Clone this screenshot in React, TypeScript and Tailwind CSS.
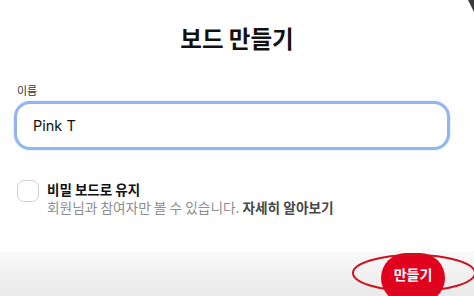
export default function App() {
  const ko = { fontFamily: '"Noto Sans CJK KR", "Noto Sans", sans-serif' };

  return (
    <div className="relative h-[296px] w-[474px] overflow-hidden bg-white" style={ko}>
      {/* corner of the window behind */}
      <svg className="absolute right-0 top-0" width="8" height="12" viewBox="0 0 8 12">
        <path d="M2 0 L8 0 L8 12 Z" fill="#3a3a3a" />
      </svg>

      <div className="flex flex-col">
        <h1 className="pt-[22px] text-center text-[23.5px] font-bold leading-[32px] text-[#111]">보드 만들기</h1>

        <label className="ml-[17px] mt-[29px] text-[11px] leading-[14px] text-[#333]">이름</label>

        <div className="ml-[14px] mt-[4px] flex h-[49px] w-[436px] items-center rounded-[16px] border-[3px] border-[#8fb6f0] pl-[16px] shadow-[0_0_2px_#b9d2f7]">
          <span className="text-[14.5px] text-[#111]" style={{ fontFamily: 'Inter, "Noto Sans", sans-serif' }}>
            Pink T
          </span>
        </div>

        <div className="ml-[17px] mt-[30px] flex gap-[8px]">
          <div className="h-[22px] w-[22px] shrink-0 rounded-[7px] border-[1.5px] border-[#d0d0d0]" />
          <div className="flex flex-col">
            <span className="text-[13.5px] font-bold leading-[18px] text-[#111]">비밀 보드로 유지</span>
            <span className="text-[13.7px] leading-[18px] text-[#8e8e8e]">
              회원님과 참여자만 볼 수 있습니다. <span className="font-bold text-[#484848]">자세히 알아보기</span>
            </span>
          </div>
        </div>
      </div>

      {/* footer */}
      <div className="absolute bottom-0 left-0 flex h-[45px] w-full justify-end bg-gradient-to-b from-[#f9f9f9] to-[#e9e9e9] pr-[29px]">
        <div className="mt-[2px] flex h-[50px] w-[64px] items-start justify-center rounded-full bg-[#e2001f] pt-[11px]">
          <span className="text-[14px] font-bold leading-[20px] text-white">만들기</span>
        </div>
      </div>

      {/* red annotation ring */}
      <svg className="absolute left-[350px] top-[250px]" width="130" height="46" viewBox="0 0 130 46">
        <ellipse cx="64" cy="23" rx="61" ry="18" fill="none" stroke="#d0101c" strokeWidth="2" />
      </svg>
    </div>
  );
}
